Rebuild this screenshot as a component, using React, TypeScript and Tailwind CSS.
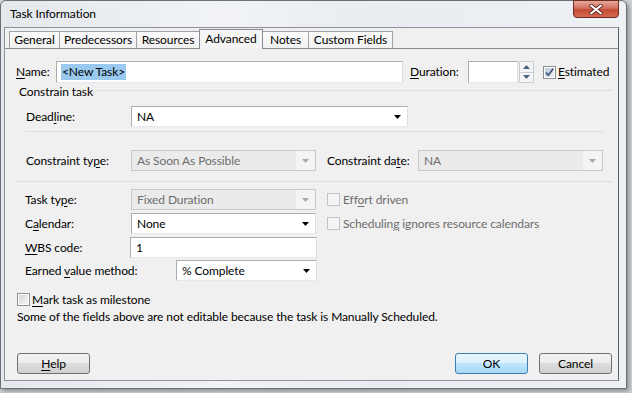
import React from 'react';

function U({ children }: { children: React.ReactNode }) {
  return <span className="underline underline-offset-[2px] decoration-[1px]">{children}</span>;
}

function Arrow({ disabled }: { disabled?: boolean }) {
  return (
    <svg width="7" height="4" viewBox="0 0 7 4">
      <path d="M0 0h7L3.5 4z" fill={disabled ? '#a8a8a8' : '#000'} />
    </svg>
  );
}

function Combo({ value, className, disabled }: { value: string; className: string; disabled?: boolean }) {
  if (disabled) {
    return (
      <div className={`flex h-[21px] border border-[#c9c9c9] bg-[#ebebeb] ${className}`}>
        <div className="flex flex-1 items-center pl-[5px] text-[#6d6d6d]">{value}</div>
        <div className="flex w-[19px] items-center justify-center bg-[#f4f4f4]">
          <Arrow disabled />
        </div>
      </div>
    );
  }
  return (
    <div className={`flex h-[21px] border border-[#abadb3] border-b-[#e3e9ef] border-r-[#dbdfe6] bg-white ${className}`}>
      <div className="flex flex-1 items-center pl-[5px]">{value}</div>
      <div className="flex w-[19px] items-center justify-center">
        <Arrow />
      </div>
    </div>
  );
}

function Check({ checked, disabled }: { checked?: boolean; disabled?: boolean }) {
  return (
    <div
      className={`flex h-[13px] w-[13px] shrink-0 items-center justify-center border ${
        disabled ? 'border-[#c4c4c4] bg-[#f4f4f4]' : 'border-[#8e8f8f] bg-white'
      }`}
    >
      <div
        className={`flex h-[9px] w-[9px] items-center justify-center ${
          disabled
            ? 'bg-[#f4f4f4]'
            : checked
              ? 'bg-[linear-gradient(135deg,#b9c9dc,#eef3f8)]'
              : 'bg-[linear-gradient(135deg,#d3d5d8,#f7f7f7)]'
        }`}
      >
        {checked && (
          <svg width="9" height="9" viewBox="0 0 9 9" className="overflow-visible">
            <path d="M1 4.5L3.3 7.2L8.2 0.8" stroke="#3a5074" strokeWidth="1.7" fill="none" />
          </svg>
        )}
      </div>
    </div>
  );
}

function Button({ children, isDefault }: { children: React.ReactNode; isDefault?: boolean }) {
  return (
    <div
      className={`flex h-[21px] w-[73px] items-center justify-center rounded-[3px] border ${
        isDefault
          ? 'border-[#3c7fb1] bg-[linear-gradient(#eaf6fd_0%,#d9f0fc_50%,#bee6fd_50%,#a7d9f5_100%)]'
          : 'border-[#707070] bg-[linear-gradient(#f2f2f2_0%,#ebebeb_50%,#dddddd_50%,#cfcfcf_100%)]'
      }`}
    >
      {children}
    </div>
  );
}

const tabs = [
  { name: 'General', w: 'w-[51px]' },
  { name: 'Predecessors', w: 'w-[77px]' },
  { name: 'Resources', w: 'w-[63px]' },
  { name: 'Advanced', w: 'w-[64px]', active: true },
  { name: 'Notes', w: 'w-[46px]' },
  { name: 'Custom Fields', w: 'w-[84px]' },
];

export default function App() {
  return (
    <div className="h-[393px] w-[632px] overflow-hidden bg-[#cfd3d7] text-[12px] leading-[14px] tracking-[-0.1px] text-black font-['Lato','Noto_Sans',sans-serif]">
      <div className="flex h-[389px] w-[627px] flex-col rounded-t-[6px] border border-[#6b7076] bg-[linear-gradient(90deg,#e4e8ec,#f1f3f6_35%,#e9ecf0_60%,#eef1f4)] pb-[7px] pl-[3px] pr-[7px] shadow-[2px_2px_4px_rgba(0,0,0,0.35)]">
        {/* title bar */}
        <div className="flex h-[26px] shrink-0 items-start justify-between">
          <div className="pl-[6px] pt-[6px]">Task Information</div>
          <div className="-mt-px flex h-[18px] w-[46px] items-center justify-center rounded-b-[4px] border border-[#6d2a22] bg-[linear-gradient(#e9a99b_0%,#d46e5c_45%,#c34a35_55%,#d86b52_100%)]">
            <svg width="14" height="11" viewBox="0 0 14 11">
              <path d="M2 1.5L12 9.5M12 1.5L2 9.5" stroke="#5a2a24" strokeWidth="3.6" strokeLinecap="round" />
              <path d="M2 1.5L12 9.5M12 1.5L2 9.5" stroke="#fff" strokeWidth="2" strokeLinecap="round" />
            </svg>
          </div>
        </div>

        {/* client area */}
        <div className="flex flex-1 flex-col border border-[#8e9297] border-r-[#5c6066] bg-[#f0f0f0]">
          {/* tabs */}
          <div className="flex h-[20px] shrink-0 items-end pl-[4px]">
            {tabs.map((t, i) =>
              t.active ? (
                <div
                  key={t.name}
                  className={`relative z-10 -mb-px -ml-px flex h-[20px] items-start justify-center border-x border-t border-[#898c95] bg-[#f4f4f4] pt-[2px] ${t.w}`}
                >
                  {t.name}
                </div>
              ) : (
                <div
                  key={t.name}
                  className={`flex h-[17px] items-center justify-center border-r border-t border-[#a0a3aa] bg-[linear-gradient(#fbfbfb,#f1f1f1)] ${
                    i === 0 ? 'border-l' : ''
                  } ${t.w}`}
                >
                  {t.name}
                </div>
              ),
            )}
          </div>

          {/* tab page */}
          <div className="flex flex-1 flex-col border-t border-[#898c95]">
            {/* name row */}
            <div className="mt-[12px] flex h-[22px] items-center pl-[11px]">
              <div className="w-[40px]">
                <U>N</U>ame:
              </div>
              <div className="flex h-[22px] w-[347px] items-center border border-[#abadb3] border-b-[#e3e9ef] border-r-[#dbdfe6] bg-white pl-[4px]">
                <span className="bg-[#99c9ef] px-[1px] py-[1px]">&lt;New Task&gt;</span>
              </div>
              <div className="ml-[7px] w-[58px]">
                <U>D</U>uration:
              </div>
              <div className="h-[22px] w-[50px] border border-[#abadb3] border-b-[#e3e9ef] border-r-[#dbdfe6] bg-white" />
              <div className="ml-px flex h-[22px] w-[15px] flex-col border border-[#c8cbd0] bg-[#f4f5f7]">
                <div className="flex flex-1 items-center justify-center border-b border-[#c8cbd0]">
                  <svg width="7" height="4" viewBox="0 0 7 4">
                    <path d="M0 4h7L3.5 0z" fill="#4d6185" />
                  </svg>
                </div>
                <div className="flex flex-1 items-center justify-center">
                  <svg width="7" height="4" viewBox="0 0 7 4">
                    <path d="M0 0h7L3.5 4z" fill="#4d6185" />
                  </svg>
                </div>
              </div>
              <div className="ml-[9px]">
                <Check checked />
              </div>
              <div className="ml-[2px]">
                <U>E</U>stimated
              </div>
            </div>

            {/* constrain task */}
            <div className="mt-px flex h-[15px] items-start pl-[14px] pr-[6px]">
              <div className="pt-px">Constrain task</div>
              <div className="ml-[4px] mt-[6px] h-px flex-1 bg-[#d5dfe5]" />
            </div>

            <div className="mt-[7px] flex h-[21px] items-center pl-[21px]">
              <div className="w-[105px]">
                Dead<U>l</U>ine:
              </div>
              <Combo value="NA" className="w-[277px]" />
            </div>

            <div className="ml-[20px] mt-[4px] h-px w-[578px] bg-[#d5dfe5]" />

            <div className="mt-[18px] flex h-[21px] items-center pl-[21px]">
              <div className="w-[105px]">
                Constraint ty<U>p</U>e:
              </div>
              <Combo value="As Soon As Possible" className="w-[185px]" disabled />
              <div className="ml-[11px] w-[91px]">
                Constraint da<U>t</U>e:
              </div>
              <Combo value="NA" className="w-[185px]" disabled />
            </div>

            <div className="ml-[11px] mt-[10px] h-px w-[597px] bg-[#d5dfe5]" />

            <div className="mt-[7px] flex h-[21px] items-center pl-[20px]">
              <div className="w-[106px]">
                Task ty<U>p</U>e:
              </div>
              <Combo value="Fixed Duration" className="w-[185px]" disabled />
              <div className="ml-[11px]">
                <Check disabled />
              </div>
              <div className="ml-[3px] text-[#6d6d6d]">
                Eff<U>o</U>rt driven
              </div>
            </div>

            <div className="mt-[3px] flex h-[21px] items-center pl-[20px]">
              <div className="w-[106px]">
                C<U>a</U>lendar:
              </div>
              <Combo value="None" className="w-[185px]" />
              <div className="ml-[11px]">
                <Check disabled />
              </div>
              <div className="ml-[3px] text-[#6d6d6d]">
                Schedulin<U>g</U> ignores resource calendars
              </div>
            </div>

            <div className="mt-[3px] flex h-[21px] items-center pl-[20px]">
              <div className="w-[105px]">
                <U>W</U>BS code:
              </div>
              <div className="flex h-[21px] w-[187px] items-center border border-[#abadb3] border-b-[#e3e9ef] border-r-[#dbdfe6] bg-white pl-[5px]">
                1
              </div>
            </div>

            <div className="mt-[2px] flex h-[21px] items-center pl-[20px]">
              <div className="w-[151px]">
                Earned <U>v</U>alue method:
              </div>
              <Combo value="% Complete" className="w-[141px]" />
            </div>

            <div className="mt-[11px] flex h-[15px] items-center pl-[12px]">
              <Check />
              <div className="ml-[2px]">
                <U>M</U>ark task as milestone
              </div>
            </div>

            <div className="mt-[3px] flex h-[14px] items-center pl-[12px]">
              Some of the fields above are not editable because the task is Manually Scheduled.
            </div>

            <div className="flex-1" />

            <div className="mb-[6px] flex h-[21px] items-center pl-[12px] pr-[6px]">
              <Button>
                <U>H</U>elp
              </Button>
              <div className="flex-1" />
              <Button isDefault>OK</Button>
              <div className="w-[11px]" />
              <Button>Cancel</Button>
            </div>
          </div>
        </div>
      </div>
    </div>
  );
}
